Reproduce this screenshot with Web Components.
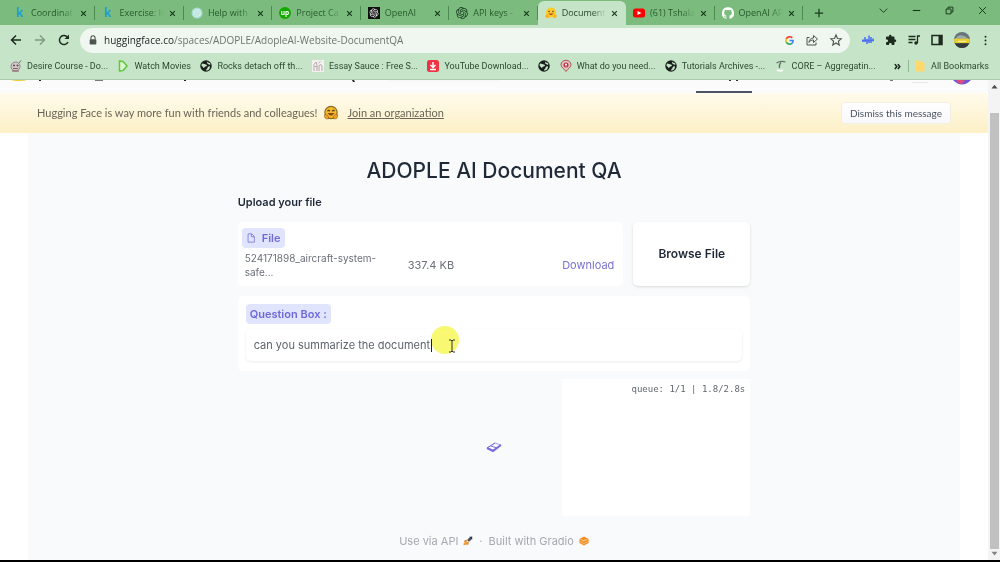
<!DOCTYPE html>
<html lang="en">
<head>
<meta charset="utf-8">
<title>ADOPLE AI Document QA</title>
<style>
    html, body {
        margin: 0;
        height: 100%;
    }

    body {
        --chrome: #c6e4c7;
        --strip: #7bbc7e;
        --accent: #6f6ad8;
        display: flex;
        flex-direction: column;
        font-family: "Open Sans", "Noto Sans", sans-serif;
        background: #fff;
        overflow: hidden;
    }
</style>
</head>
<body>
    <tab-strip>
        <browser-tab icon="kaggle">Coordinat</browser-tab>
        <browser-tab icon="kaggle">Exercise: In</browser-tab>
        <browser-tab icon="gpt">Help with</browser-tab>
        <browser-tab icon="upwork">Project Ca</browser-tab>
        <browser-tab icon="openai-dark">OpenAI</browser-tab>
        <browser-tab icon="openai">API keys -</browser-tab>
        <browser-tab icon="hug" active>Document</browser-tab>
        <browser-tab icon="youtube">(61) Tshala</browser-tab>
        <browser-tab icon="github">OpenAI AP</browser-tab>
    </tab-strip>
    <address-bar></address-bar>
    <bookmarks-bar>
        <bookmark-link icon="robot">Desire Course - Do...</bookmark-link>
        <bookmark-link icon="play">Watch Movies</bookmark-link>
        <bookmark-link icon="globe">Rocks detach off th...</bookmark-link>
        <bookmark-link icon="essay">Essay Sauce : Free S...</bookmark-link>
        <bookmark-link icon="ytdown">YouTube Download...</bookmark-link>
        <bookmark-link icon="globe"></bookmark-link>
        <bookmark-link icon="pin">What do you need...</bookmark-link>
        <bookmark-link icon="globe">Tutorials Archives -...</bookmark-link>
        <bookmark-link icon="core">CORE – Aggregatin...</bookmark-link>
        <bookmark-link slot="all" icon="folder">All Bookmarks</bookmark-link>
    </bookmarks-bar>
    <page-viewport>
        <space-header></space-header>
        <notice-banner>
            Hugging Face is way more fun with friends and colleagues!
            <a slot="link" href="#join">Join an organization</a>
        </notice-banner>
        <document-qa>
            <file-card name="524171898_aircraft-system-safe..." size="337.4 KB"></file-card>
            <question-box slot="question" value="can you summarize the document"></question-box>
            <queue-status slot="status">queue: 1/1 | 1.8/2.8s</queue-status>
        </document-qa>
    </page-viewport>

<script>
const knot = (color) => `<path fill="${color}" d="M22.2819 9.8211a5.9847 5.9847 0 0 0-.5157-4.9108 6.0462 6.0462 0 0 0-6.5098-2.9A6.0651 6.0651 0 0 0 4.9807 4.1818a5.9847 5.9847 0 0 0-3.9977 2.9 6.0462 6.0462 0 0 0 .7427 7.0966 5.98 5.98 0 0 0 .511 4.9107 6.051 6.051 0 0 0 6.5146 2.9001A5.9847 5.9847 0 0 0 13.2599 24a6.0557 6.0557 0 0 0 5.7718-4.2058 5.9894 5.9894 0 0 0 3.9977-2.9001 6.0557 6.0557 0 0 0-.7475-7.0729zm-9.022 12.6081a4.4755 4.4755 0 0 1-2.8764-1.0408l.1419-.0804 4.7783-2.7582a.7948.7948 0 0 0 .3927-.6813v-6.7369l2.02 1.1686a.071.071 0 0 1 .038.052v5.5826a4.504 4.504 0 0 1-4.4945 4.4944zm-9.6607-4.1254a4.4708 4.4708 0 0 1-.5346-3.0137l.142.0852 4.783 2.7582a.7712.7712 0 0 0 .7806 0l5.8428-3.3685v2.3324a.0804.0804 0 0 1-.0332.0615L9.74 19.9502a4.4992 4.4992 0 0 1-6.1408-1.6464zM2.3408 7.8956a4.485 4.485 0 0 1 2.3655-1.9728V11.6a.7664.7664 0 0 0 .3879.6765l5.8144 3.3543-2.0201 1.1685a.0757.0757 0 0 1-.071 0l-4.8303-2.7865A4.504 4.504 0 0 1 2.3408 7.872zm16.5963 3.8558L13.1038 8.364 15.1192 7.2a.0757.0757 0 0 1 .071 0l4.8303 2.7913a4.4944 4.4944 0 0 1-.6765 8.1042v-5.6772a.79.79 0 0 0-.407-.667zm2.0107-3.0231l-.142-.0852-4.7735-2.7818a.7759.7759 0 0 0-.7854 0L9.409 9.2297V6.8974a.0662.0662 0 0 1 .0284-.0615l4.8303-2.7866a4.4992 4.4992 0 0 1 6.6802 4.66zM8.3065 12.863l-2.02-1.1638a.0804.0804 0 0 1-.038-.0567V6.0742a4.4992 4.4992 0 0 1 7.3757-3.4537l-.142.0805L8.704 5.459a.7948.7948 0 0 0-.3927.6813zm1.0976-2.3654l2.602-1.4998 2.6069 1.4998v2.9994l-2.5974 1.4997-2.6067-1.4997Z"/>`;

const icons = {
    "kaggle": `<text x="4" y="20" font-family="Open Sans, sans-serif" font-size="24" font-weight="700" fill="#1f9fd0">k</text>`,
    "gpt": `<circle cx="12" cy="12" r="11" fill="#a9dcd3"/><g transform="translate(4 4) scale(.67)">${knot("#f2fbf9")}</g>`,
    "upwork": `<circle cx="12" cy="12" r="12" fill="#14a800"/><text x="12" y="16" text-anchor="middle" font-family="Open Sans, sans-serif" font-size="13" font-weight="700" fill="#fff">up</text>`,
    "openai-dark": `<path d="M0 0h24v24H0z" fill="#10120f"/><g transform="translate(3 3) scale(.75)">${knot("#fff")}</g>`,
    "openai": knot("#183a20"),
    "hug": `<circle cx="12" cy="11" r="10" fill="#ffc928"/><path d="M7 13q5 7 10 0z" fill="#b3462b"/><circle cx="8" cy="9" r="1.5" fill="#3a3b45"/><circle cx="16" cy="9" r="1.5" fill="#3a3b45"/><path d="M1 16c3-3 7 0 7 6H4c-2 0-4-3-3-6zM23 16c-3-3-7 0-7 6h4c2 0 4-3 3-6z" fill="#ffb319"/>`,
    "youtube": `<rect y="3" width="24" height="18" rx="5" fill="#f00"/><path d="M9 8l8 4-8 4z" fill="#fff"/>`,
    "github": `<path fill="#fff" d="M12 .3a12 12 0 0 0-3.8 23.4c.6.1.8-.3.8-.6v-2c-3.3.7-4-1.6-4-1.6-.6-1.4-1.4-1.8-1.4-1.8-1-.7.1-.7.1-.7 1.2 0 1.9 1.2 1.9 1.2 1 1.8 2.8 1.3 3.5 1 0-.8.4-1.3.7-1.6-2.7-.3-5.5-1.3-5.5-6 0-1.2.5-2.3 1.3-3.1-.2-.4-.6-1.6 0-3.2 0 0 1-.3 3.4 1.2a11.5 11.5 0 0 1 6 0c2.3-1.5 3.3-1.2 3.3-1.2.6 1.6.2 2.8 0 3.2.9.8 1.3 1.9 1.3 3.2 0 4.6-2.8 5.6-5.5 5.9.5.4.9 1 .9 2.2v3.3c0 .3.1.7.8.6A12 12 0 0 0 12 .3"/>`,
    "close": `<path d="M4 4l16 16M20 4L4 20" stroke="currentColor" stroke-width="4"/>`,
    "plus": `<path d="M12 2v20M2 12h20" stroke="currentColor" stroke-width="3"/>`,
    "chevron": `<path d="M2 7l10 10L22 7" fill="none" stroke="currentColor" stroke-width="2.5"/>`,
    "minimize": `<path d="M2 12h20" stroke="currentColor" stroke-width="3"/>`,
    "restore": `<path d="M3 8h13v13H3zM8 8V3h13v13h-5" fill="none" stroke="currentColor" stroke-width="2.6"/>`,
    "exit": `<path d="M3 3l18 18M21 3L3 21" stroke="currentColor" stroke-width="2.6"/>`,
    "back": `<path d="M22 12H3M12 3l-9 9 9 9" fill="none" stroke="currentColor" stroke-width="3"/>`,
    "forward": `<path d="M2 12h19M12 3l9 9-9 9" fill="none" stroke="currentColor" stroke-width="2.6"/>`,
    "reload": `<path d="M20 16a9 9 0 1 1-2-10.5" fill="none" stroke="currentColor" stroke-width="3"/><path d="M22 1v9h-9z" fill="currentColor"/>`,
    "lock": `<rect x="4" y="10" width="16" height="13" rx="2" fill="currentColor"/><path d="M7 11V7a5 5 0 0 1 10 0v4" fill="none" stroke="currentColor" stroke-width="2.5"/>`,
    "google": `<g fill="none" stroke-width="4.5"><path d="M19.5 5A10 10 0 0 0 3.5 7.5" stroke="#ea4335"/><path d="M3.5 7.5a10 10 0 0 0 0 9" stroke="#fbbc05"/><path d="M3.5 16.5A10 10 0 0 0 18.5 19.5" stroke="#34a853"/><path d="M18.5 19.5A10 10 0 0 0 21.5 12H12" stroke="#4285f4"/></g>`,
    "share": `<path d="M7 7H2v15h18v-5M6 17c0-6 4-9 9-9V3l8 7-8 7v-5c-4 0-7 1-9 5z" fill="none" stroke="currentColor" stroke-width="2"/>`,
    "star": `<path d="M12 2l3 7 7.5.6-5.7 5 1.7 7.4-6.5-4-6.5 4 1.7-7.4-5.7-5L9 9z" fill="none" stroke="currentColor" stroke-width="2.2"/>`,
    "wave": `<path d="M2 11v5M6 6v10M10 10v10M14 3v15M18 6v12M22 9v5M0 13h24" stroke="#4a6ff0" stroke-width="3"/>`,
    "puzzle": `<path fill="currentColor" d="M20 11h-1V7c0-1-1-2-2-2h-4V4a2.5 2.5 0 0 0-5 0v1H4C3 5 2 6 2 7v4h1.5a2.7 2.7 0 0 1 0 5.4H2V20c0 1 1 2 2 2h4v-1.5a2.7 2.7 0 0 1 5.4 0V22H17c1 0 2-1 2-2v-4h1a2.5 2.5 0 0 0 0-5z"/>`,
    "queue": `<path d="M1 5h14M1 11h14M1 17h8M19 18V4h5" fill="none" stroke="currentColor" stroke-width="2.6"/><circle cx="16" cy="18" r="3.5" fill="currentColor"/>`,
    "panel": `<path d="M2 3h20v18H2z" fill="none" stroke="currentColor" stroke-width="3"/><path d="M15 3h7v18h-7z" fill="currentColor"/>`,
    "avatar": `<clipPath id="c"><circle cx="12" cy="12" r="12"/></clipPath><g clip-path="url(#c)"><path d="M0 0h24v24H0z" fill="#66757c"/><path d="M0 11q6-5 16-3l8 3v6H0z" fill="#e8cf2d"/><path d="M5 6q7-3 13 1l2 3H4z" fill="#9fa9a5"/><path d="M0 17h24v7H0z" fill="#34393a"/><path d="M6 13h12v2H6z" fill="#f6ec9a"/></g>`,
    "more": `<g fill="currentColor"><circle cx="12" cy="2" r="2.5"/><circle cx="12" cy="12" r="2.5"/><circle cx="12" cy="22" r="2.5"/></g>`,
    "robot": `<circle cx="11" cy="13" r="9" fill="#d4c8c9" stroke="#8e8288" stroke-width="2"/><circle cx="8" cy="11" r="2" fill="#574b50"/><circle cx="15" cy="11" r="2" fill="#574b50"/><path d="M6 17h10M18 6l4-5M4 22h14" stroke="#8d5a61" stroke-width="2"/>`,
    "play": `<path d="M5 2l7 1 8 9-8 9-7 1z" fill="#dff5d2" stroke="#5cc83b" stroke-width="3"/>`,
    "globe": `<circle cx="12" cy="12" r="11.5" fill="#17201a"/><path d="M4 7c4 0 5 2 8 2 3 1 2 4-1 4-2 0-2 3-4 3-1-3-4-3-4-6zM14 2c0 3 3 3 6 4l1 3c-3 1-6-1-7-3zM20 13c-3-1-5 1-5 3s-3 2-3 5c4 1 8-2 8-8z" fill="#c6e4c7"/>`,
    "essay": `<path d="M0 0h24v24H0z" fill="#f3f1f0"/><path d="M4 22V9l4-5 2 5v13M14 22V11l4-2 2 4v9M6 13h4M13 6l4-3" fill="none" stroke="#b9a5a8" stroke-width="2"/>`,
    "ytdown": `<rect width="24" height="24" rx="5" fill="#ec3445"/><path d="M12 4v10M7 10l5 5 5-5M6 19h12" fill="none" stroke="#fff" stroke-width="2.8"/>`,
    "pin": `<path d="M12 23C9 18 2 15 2 9.5a10 9 0 0 1 20 0C22 15 15 18 12 23z" fill="#ddc3c0" stroke="#b3545a" stroke-width="2"/><circle cx="12" cy="10" r="5" fill="#c22f3d"/><path d="M12 7v6M10 9h4" stroke="#fff" stroke-width="2"/>`,
    "core": `<path d="M3 6q8-5 18-2M12 5c-3 3-4 7-3 11" fill="none" stroke="#5f7464" stroke-width="2.5"/><path d="M4 20q6 3 12 0" fill="none" stroke="#fff" stroke-width="3"/>`,
    "folder": `<path d="M3 3q0-2 2-2h6l3 3h5q2 0 2 2v15q0 2-2 2H5q-2 0-2-2z" fill="#ffd86c"/>`,
    "smile": `<circle cx="12" cy="11" r="10.5" fill="#f6b92c" stroke="#8a6a25" stroke-width="2"/><path d="M6 12q6 9 12 0z" fill="#8d4820"/><path d="M6 9q2-3 4 0M14 9q2-3 4 0" fill="none" stroke="#4b3a1d" stroke-width="2"/><path d="M1 15c3-2 7 1 7 7H4c-2 0-4-4-3-7zM23 15c-3-2-7 1-7 7h4c2 0 4-4 3-7z" fill="#f29f1f" stroke="#805b1e" stroke-width="1"/>`,
    "doc": `<path d="M5 2h9l6 6v14H5zM13 2v7h7" fill="none" stroke="currentColor" stroke-width="1.8"/>`,
    "rocket": `<path d="M22 2c-6 0-9 3-12 8l4 4c5-3 8-6 8-12z" fill="#4d5663"/><path d="M15 2h7v7z" fill="#2b3240"/><path d="M10 9l-6 1-2 4 6 1zM14 14l-1 6-4 2-1-6z" fill="#e78422"/><path d="M8 13l3 3-4 5-6 1 1-5z" fill="#f09a2b"/>`,
    "gradio": `<path d="M12 1l11 6v10l-11 6L1 17V7z" fill="#f38d1e"/><path d="M3 8l9 4 9-4M3 14l9 4 9-4M8 12l8-3" fill="none" stroke="#fbd09a" stroke-width="1.8"/>`,
    "up": `<path d="M12 7l8 10H4z" fill="#4d4d4d"/>`,
    "down": `<path d="M12 17l8-10H4z" fill="#858585"/>`
};

class UiIcon extends HTMLElement {
    constructor() {
        super();
        this.attachShadow({ mode: "open" });
    }

    connectedCallback() {
        const size = this.getAttribute("size") || "12";
        this.shadowRoot.innerHTML = `
            <style>
                :host { display: inline-flex; flex: none; }
                svg { display: block; overflow: visible; }
            </style>
            <svg width="${size}" height="${size}" viewBox="0 0 24 24" aria-hidden="true">${icons[this.getAttribute("name")]}</svg>
        `;
    }
}

class TabStrip extends HTMLElement {
    constructor() {
        super();
        this.attachShadow({ mode: "open" }).innerHTML = `
            <style>
                :host {
                    display: flex;
                    flex: none;
                    height: 25px;
                    padding-left: 7px;
                    background: var(--strip);
                    color: #173c1c;
                }
                .tabs {
                    flex: 1;
                    display: grid;
                    grid-template-columns: repeat(9, minmax(0, 1fr));
                }
                .controls {
                    width: 197px;
                    display: flex;
                    align-items: center;
                    justify-content: space-between;
                    box-sizing: border-box;
                    padding: 0 13px 0 11px;
                }
                .window {
                    display: flex;
                    gap: 24px;
                    padding-bottom: 4px;
                }
                button {
                    display: flex;
                    padding: 0;
                    border: 0;
                    background: none;
                    color: inherit;
                }
            </style>
            <div class="tabs"><slot></slot></div>
            <div class="controls">
                <button aria-label="New tab"><ui-icon name="plus" size="10"></ui-icon></button>
                <div class="window">
                    <button aria-label="Search tabs"><ui-icon name="chevron" size="9"></ui-icon></button>
                    <button aria-label="Minimize"><ui-icon name="minimize" size="9"></ui-icon></button>
                    <button aria-label="Restore"><ui-icon name="restore" size="9"></ui-icon></button>
                    <button aria-label="Close"><ui-icon name="exit" size="9"></ui-icon></button>
                </div>
            </div>
        `;
    }
}

class BrowserTab extends HTMLElement {
    constructor() {
        super();
        this.attachShadow({ mode: "open" });
    }

    connectedCallback() {
        this.shadowRoot.innerHTML = `
            <style>
                :host {
                    display: flex;
                    align-items: center;
                    gap: 5px;
                    margin-top: 1px;
                    padding: 0 8px 0 7px;
                    font: 9px/12px "Open Sans", sans-serif;
                    color: #265a2c;
                    background: linear-gradient(#4c8a50, #4c8a50) right center / 1px 14px no-repeat;
                }
                :host([active]) {
                    background: var(--chrome);
                    border-radius: 6px 6px 0 0;
                    color: #254a2a;
                }
                .title {
                    flex: 1;
                    overflow: hidden;
                    white-space: nowrap;
                    mask-image: linear-gradient(90deg, #000 70%, transparent);
                }
                button {
                    display: flex;
                    padding: 0;
                    border: 0;
                    background: none;
                    color: #163a1b;
                }
            </style>
            <ui-icon name="${this.getAttribute("icon")}"></ui-icon>
            <span class="title"><slot></slot></span>
            <button aria-label="Close tab"><ui-icon name="close" size="7"></ui-icon></button>
        `;
    }
}

class AddressBar extends HTMLElement {
    constructor() {
        super();
        this.attachShadow({ mode: "open" }).innerHTML = `
            <style>
                :host {
                    display: flex;
                    flex: none;
                    align-items: center;
                    gap: 12px;
                    height: 30px;
                    padding: 0 10px;
                    background: var(--chrome);
                    color: #1d2b1f;
                }
                button {
                    display: flex;
                    padding: 0;
                    border: 0;
                    background: none;
                    color: inherit;
                }
                button.dim { color: #7b9a7e; }
                .field {
                    flex: 1;
                    display: flex;
                    align-items: center;
                    gap: 12px;
                    height: 25px;
                    margin-left: -2px;
                    padding: 0 8px;
                    border-radius: 13px;
                    background: #eff7f0;
                    color: #4d544e;
                }
                .url {
                    flex: 1;
                    margin-left: -6px;
                    font: 10px/14px "Open Sans", sans-serif;
                    color: #6c756d;
                    white-space: nowrap;
                }
                .url b { font-weight: 400; color: #1d211e; }
                .tools {
                    display: flex;
                    align-items: center;
                    gap: 11px;
                }
            </style>
            <button aria-label="Back"><ui-icon name="back"></ui-icon></button>
            <button class="dim" aria-label="Forward"><ui-icon name="forward"></ui-icon></button>
            <button aria-label="Reload"><ui-icon name="reload"></ui-icon></button>
            <div class="field">
                <ui-icon name="lock" size="10"></ui-icon>
                <span class="url"><b>huggingface.co</b>/spaces/ADOPLE/AdopleAI-Website-DocumentQA</span>
                <ui-icon name="google" size="9"></ui-icon>
                <button aria-label="Share"><ui-icon name="share"></ui-icon></button>
                <button aria-label="Bookmark"><ui-icon name="star"></ui-icon></button>
            </div>
            <div class="tools">
                <button aria-label="Audio extension"><ui-icon name="wave"></ui-icon></button>
                <button aria-label="Extensions"><ui-icon name="puzzle"></ui-icon></button>
                <button aria-label="Media"><ui-icon name="queue"></ui-icon></button>
                <button aria-label="Side panel"><ui-icon name="panel"></ui-icon></button>
                <button aria-label="Profile"><ui-icon name="avatar" size="16"></ui-icon></button>
                <button aria-label="Menu"><ui-icon name="more" size="9"></ui-icon></button>
            </div>
        `;
    }
}

class BookmarksBar extends HTMLElement {
    constructor() {
        super();
        this.attachShadow({ mode: "open" }).innerHTML = `
            <style>
                :host {
                    display: flex;
                    flex: none;
                    align-items: center;
                    height: 22px;
                    padding: 0 11px 2px 10px;
                    background: var(--chrome);
                    border-bottom: 1px solid #a9cbab;
                    font: 9px/12px Roboto, "Open Sans", sans-serif;
                    color: #2c4a30;
                }
                .list {
                    flex: 1;
                    display: flex;
                    align-items: center;
                    justify-content: space-between;
                }
                button {
                    margin: 0 7px 0 18px;
                    padding: 0;
                    border: 0;
                    background: none;
                    color: #16261a;
                    font: 700 12px/12px "Open Sans", sans-serif;
                }
                .all {
                    padding-left: 5px;
                    border-left: 1px solid #90b893;
                }
            </style>
            <div class="list"><slot></slot></div>
            <button aria-label="More bookmarks">»</button>
            <div class="all"><slot name="all"></slot></div>
        `;
    }
}

class BookmarkLink extends HTMLElement {
    constructor() {
        super();
        this.attachShadow({ mode: "open" });
    }

    connectedCallback() {
        this.shadowRoot.innerHTML = `
            <style>
                :host { display: block; }
                a {
                    display: flex;
                    align-items: center;
                    gap: 5px;
                    color: inherit;
                    text-decoration: none;
                    white-space: nowrap;
                }
            </style>
            <a href="#" aria-label="${this.textContent || "Bookmark"}">
                <ui-icon name="${this.getAttribute("icon")}"></ui-icon>
                ${this.textContent ? "<span><slot></slot></span>" : ""}
            </a>
        `;
    }
}

class PageViewport extends HTMLElement {
    constructor() {
        super();
        this.attachShadow({ mode: "open" }).innerHTML = `
            <style>
                :host {
                    flex: 1;
                    display: flex;
                    min-height: 0;
                    border-bottom: 2px solid #000;
                }
                .page {
                    flex: 1;
                    min-width: 0;
                    display: flex;
                    flex-direction: column;
                    overflow: hidden;
                }
                .scroll {
                    width: 12px;
                    display: flex;
                    flex-direction: column;
                    align-items: center;
                    box-sizing: border-box;
                    padding: 2px 0;
                    background: #f4f4f4;
                }
                .thumb {
                    flex: 1;
                    width: 9px;
                    margin-top: 22px;
                    background: #c1c1c1;
                }
            </style>
            <div class="page"><slot></slot></div>
            <div class="scroll">
                <ui-icon name="up" size="9"></ui-icon>
                <div class="thumb"></div>
                <ui-icon name="down" size="9"></ui-icon>
            </div>
        `;
    }
}

class SpaceHeader extends HTMLElement {
    constructor() {
        super();
        this.attachShadow({ mode: "open" }).innerHTML = `
            <style>
                :host {
                    display: flex;
                    flex: none;
                    justify-content: space-between;
                    height: 13px;
                    overflow: hidden;
                    background: #fbfbfc;
                }
                svg { display: block; flex: none; }
            </style>
            <svg width="500" height="13" aria-hidden="true">
                <ellipse cx="19" cy="0" rx="7" ry="1" fill="#f0cf3d"/>
                <path d="M39 0h2v1h-2zM184 0h2v1h-2zM352 0h2l1 2h-2z" fill="#222"/>
                <path d="M95 0h8v1h-8z" fill="#777"/>
                <path d="M388 0h112v2H388z" fill="#f6f7f9"/>
            </svg>
            <svg width="308" height="13" aria-hidden="true">
                <path d="M49 0h2v1h-2zM56 0h2v1h-2z" fill="#333"/>
                <path d="M16 11h56v2H16z" fill="#4b5563"/>
                <path d="M210 0h3v1h-3z" fill="#777"/>
                <path d="M232 2h16v1h-16z" fill="#e5e7eb"/>
                <path d="M273 0h18q-9 9-18 0z" fill="#6c55d8"/>
                <path d="M276 0h9l-3 4q-4 0-6-4z" fill="#dd4b7c"/>
            </svg>
        `;
    }
}

class NoticeBanner extends HTMLElement {
    constructor() {
        super();
        this.attachShadow({ mode: "open" }).innerHTML = `
            <style>
                :host {
                    display: flex;
                    flex: none;
                    align-items: center;
                    height: 40px;
                    padding: 0 37px;
                    background: linear-gradient(#fffbec, #fdf0c6);
                    font: 11px/16px Lato, "Open Sans", sans-serif;
                    color: #6a6657;
                    white-space: nowrap;
                }
                ui-icon { margin: 0 10px 0 6px; }
                ::slotted(a) { color: inherit; }
                button {
                    margin-left: auto;
                    height: 22px;
                    padding: 0 8px;
                    border: 1px solid #f3efe6;
                    border-radius: 4px;
                    background: linear-gradient(#fff, #f8f7fb);
                    font: 10px/16px Lato, "Open Sans", sans-serif;
                    color: #4b5563;
                }
            </style>
            <span><slot></slot></span>
            <ui-icon name="smile" size="14"></ui-icon>
            <slot name="link"></slot>
            <button>Dismiss this message</button>
        `;
    }
}

class DocumentQa extends HTMLElement {
    constructor() {
        super();
        this.attachShadow({ mode: "open" }).innerHTML = `
            <style>
                :host {
                    flex: 1;
                    display: block;
                    margin: 0 28px;
                    background: #f9fafc;
                    font-family: Inter, "Open Sans", sans-serif;
                    color: #1f2937;
                }
                main {
                    width: 55%;
                    min-width: 512px;
                    margin: 0 auto;
                    padding-top: 24px;
                }
                h1 {
                    margin: 0;
                    font-size: 21px;
                    line-height: 28px;
                    font-weight: 500;
                    text-align: center;
                }
                h2 {
                    margin: 9px 0 12px;
                    font-size: 11px;
                    line-height: 16px;
                    font-weight: 600;
                }
                .upload {
                    display: grid;
                    grid-template-columns: 1fr 117px;
                    gap: 10px;
                    margin-bottom: 10px;
                }
                .browse {
                    border: 0;
                    border-radius: 5px;
                    background: #fff;
                    box-shadow: 0 1px 3px #0000001f;
                    font: 600 12px/16px Inter, "Open Sans", sans-serif;
                    color: #1f2937;
                }
                .stage {
                    display: grid;
                    grid-template-columns: 1fr 188px;
                    align-items: center;
                    margin-top: 8px;
                }
                .spinner {
                    grid-area: 1 / 1 / 2 / 3;
                    justify-self: center;
                }
                ::slotted(queue-status) { grid-area: 1 / 2; }
                footer {
                    display: flex;
                    align-items: center;
                    justify-content: center;
                    gap: 6px;
                    margin-top: 17px;
                    font-size: 11px;
                    line-height: 16px;
                    color: #a5a8ae;
                }
                footer a {
                    display: flex;
                    align-items: center;
                    gap: 5px;
                    color: inherit;
                    text-decoration: none;
                }
            </style>
            <main>
                <h1>ADOPLE AI Document QA</h1>
                <h2>Upload your file</h2>
                <div class="upload">
                    <slot></slot>
                    <button class="browse">Browse File</button>
                </div>
                <slot name="question"></slot>
                <div class="stage">
                    <slot name="status"></slot>
                    <svg class="spinner" width="18" height="14" viewBox="0 0 18 14" fill="none" aria-hidden="true">
                        <path d="M2 7l8-5 6 2-8 5z" stroke="#a9a0ea"/>
                        <path d="M2 7l6 3 8-6" stroke="#7a6bdc" stroke-width="2"/>
                        <path d="M2 7l8-5M6 5l6 2" stroke="#7a6bdc"/>
                    </svg>
                </div>
                <footer>
                    <a href="#api">Use via API <ui-icon name="rocket" size="10"></ui-icon></a>
                    <span>·</span>
                    <a href="#gradio">Built with Gradio <ui-icon name="gradio" size="10"></ui-icon></a>
                </footer>
            </main>
        `;
    }
}

class FileCard extends HTMLElement {
    constructor() {
        super();
        this.attachShadow({ mode: "open" });
    }

    connectedCallback() {
        this.shadowRoot.innerHTML = `
            <style>
                :host {
                    display: block;
                    box-sizing: border-box;
                    height: 64px;
                    padding: 6px 4px;
                    border-radius: 5px;
                    background: #fff;
                }
                .label {
                    display: inline-flex;
                    align-items: center;
                    gap: 6px;
                    height: 20px;
                    padding: 0 5px 0 4px;
                    border-radius: 4px;
                    background: #e0e4fd;
                    color: var(--accent);
                    font-size: 11px;
                    line-height: 16px;
                    font-weight: 600;
                    vertical-align: top;
                }
                table {
                    width: 100%;
                    table-layout: fixed;
                    border-collapse: collapse;
                    margin-top: 3px;
                    font-size: 11px;
                    line-height: 14px;
                    color: #6b6f78;
                }
                td { padding: 0 0 0 3px; }
                td:first-child { width: 160px; font-size: 10px; }
                td:last-child { padding-right: 5px; text-align: right; }
                .name { display: block; max-width: 145px; }
                a { color: #7a72cf; text-decoration: none; }
            </style>
            <span class="label"><ui-icon name="doc" size="10"></ui-icon>File</span>
            <table>
                <tr>
                    <td><span class="name">${this.getAttribute("name")}</span></td>
                    <td>${this.getAttribute("size")}</td>
                    <td><a href="#download">Download</a></td>
                </tr>
            </table>
        `;
    }
}

class QuestionBox extends HTMLElement {
    constructor() {
        super();
        this.attachShadow({ mode: "open" });
    }

    connectedCallback() {
        this.shadowRoot.innerHTML = `
            <style>
                :host {
                    display: block;
                    position: relative;
                    box-sizing: border-box;
                    height: 75px;
                    padding: 8px;
                    border-radius: 5px;
                    background: #fff;
                }
                label {
                    display: inline-block;
                    padding: 2px 4px;
                    border-radius: 4px;
                    background: #e0e4fd;
                    color: var(--accent);
                    font-size: 11px;
                    line-height: 16px;
                    font-weight: 600;
                    vertical-align: top;
                }
                input {
                    display: block;
                    box-sizing: border-box;
                    width: 100%;
                    height: 32px;
                    margin-top: 5px;
                    padding: 0 8px;
                    border: 0;
                    border-radius: 5px;
                    background: #fff;
                    box-shadow: 0 1px 3px #00000014;
                    font: 11px/16px Inter, "Open Sans", sans-serif;
                    color: #5d626b;
                    outline: none;
                }
                /* mouse pointer with its highlight, over the text */
                .pointer {
                    position: absolute;
                    left: 192px;
                    top: 29px;
                    mix-blend-mode: multiply;
                }
            </style>
            <label for="question">Question Box :</label>
            <input id="question" type="text" value="${this.getAttribute("value")}">
            <svg class="pointer" width="32" height="32" viewBox="0 0 32 32" aria-hidden="true">
                <circle cx="15" cy="15" r="14" fill="#f8f873"/>
                <path d="M1 14v13" stroke="#222" stroke-width="1" transform="translate(.5 0)"/>
                <path d="M19 15h2l1 1 1-1h2M22 16v10M19 27h2l1-1 1 1h2" fill="none" stroke="#333"/>
            </svg>
        `;
    }
}

class QueueStatus extends HTMLElement {
    constructor() {
        super();
        this.attachShadow({ mode: "open" }).innerHTML = `
            <style>
                :host {
                    display: block;
                    box-sizing: border-box;
                    height: 137px;
                    padding: 4px 5px;
                    background: #fff;
                    font: 9px/12px "DejaVu Sans Mono", monospace;
                    color: #62666d;
                    text-align: right;
                }
            </style>
            <slot></slot>
        `;
    }
}

customElements.define("ui-icon", UiIcon);
customElements.define("tab-strip", TabStrip);
customElements.define("browser-tab", BrowserTab);
customElements.define("address-bar", AddressBar);
customElements.define("bookmarks-bar", BookmarksBar);
customElements.define("bookmark-link", BookmarkLink);
customElements.define("page-viewport", PageViewport);
customElements.define("space-header", SpaceHeader);
customElements.define("notice-banner", NoticeBanner);
customElements.define("document-qa", DocumentQa);
customElements.define("file-card", FileCard);
customElements.define("question-box", QuestionBox);
customElements.define("queue-status", QueueStatus);
</script>
</body>
</html>
